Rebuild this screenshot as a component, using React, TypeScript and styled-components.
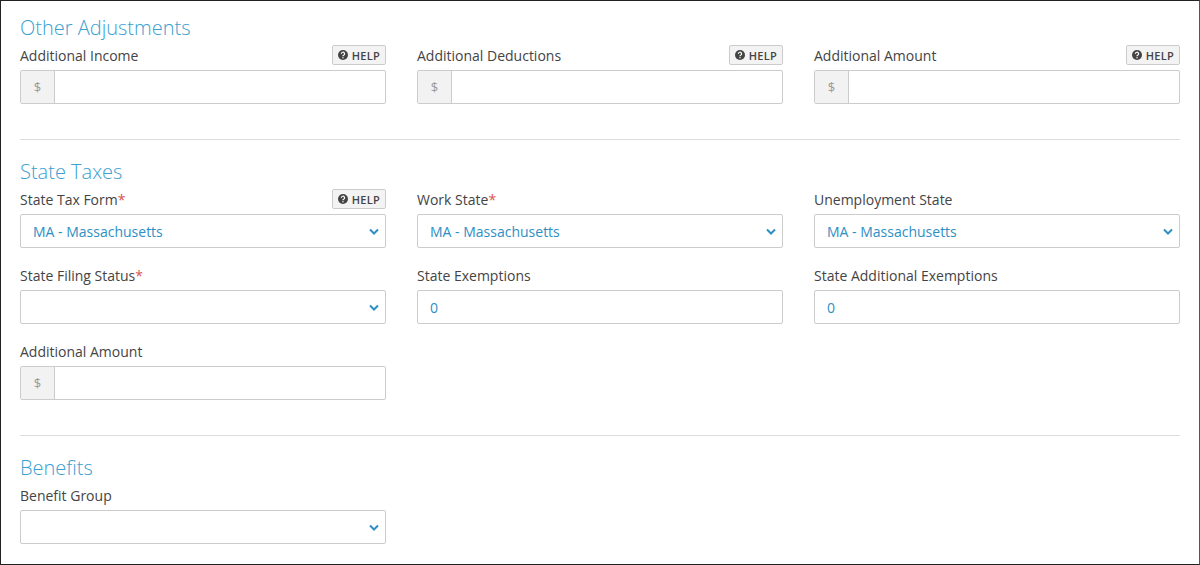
import styled, { createGlobalStyle } from 'styled-components'

const Global = createGlobalStyle`
  body { margin: 0; font-family: "Open Sans", sans-serif; color: #444; background: #fff; }
`

const Frame = styled.div`
  box-sizing: border-box;
  width: 1200px;
  height: 565px;
  border: 1px solid #222;
  border-right-color: #555;
  padding: 11px 19px 0 19px;
  overflow: hidden;
`

const Section = styled.section<{ $last?: boolean }>`
  padding-bottom: ${({ $last }) => ($last ? '0' : '35px')};
  margin-bottom: ${({ $last }) => ($last ? '0' : '16px')};
  border-bottom: ${({ $last }) => ($last ? 'none' : '1px solid #ddd')};
`

const Heading = styled.h2`
  margin: 0 0 1px;
  font-size: 20px;
  font-weight: 300;
  line-height: 32px;
  color: #3ba0cf;
`

const Grid = styled.div`
  display: grid;
  grid-template-columns: repeat(3, 366px);
  column-gap: 31px;
  row-gap: 17px;
`

const Field = styled.div``

const LabelRow = styled.div`
  display: flex;
  justify-content: space-between;
  align-items: center;
  height: 20px;
  margin-bottom: 5px;
`

const Label = styled.label`
  font-size: 14px;
  color: #444;
`

const Req = styled.span`
  color: #d9534f;
`

const Help = styled.span`
  display: inline-flex;
  align-items: center;
  gap: 4px;
  height: 20px;
  padding: 0 5px;
  box-sizing: border-box;
  border: 1px solid #ccc;
  border-radius: 2px;
  background: #f3f3f3;
  font-size: 11px;
  font-weight: 600;
  color: #444;
  letter-spacing: 0.3px;
`

const Box = styled.div`
  display: flex;
  height: 34px;
  box-sizing: border-box;
  border: 1px solid #ccc;
  border-radius: 2px;
  background: #fff;
`

const Addon = styled.span`
  width: 33px;
  display: flex;
  align-items: center;
  justify-content: center;
  background: #f2f2f2;
  border-right: 1px solid #ccc;
  color: #999;
  font-size: 13px;
`

const Value = styled.span`
  flex: 1;
  display: flex;
  align-items: center;
  padding: 0 12px;
  font-size: 14px;
  color: #2e8fc4;
`

const Chevron = styled.span`
  display: flex;
  align-items: center;
  padding-right: 6px;
`

const HelpIcon = () => (
  <svg width="10" height="10" viewBox="0 0 10 10">
    <circle cx="5" cy="5" r="5" fill="#444" />
    <path d="M3.4 3.9a1.6 1.6 0 1 1 2.2 1.4c-.5.2-.6.5-.6.9" stroke="#fff" strokeWidth="1.2" fill="none" />
    <circle cx="5" cy="7.7" r=".7" fill="#fff" />
  </svg>
)

const Money = () => (
  <Box>
    <Addon>$</Addon>
    <Value />
  </Box>
)

const Select = ({ value }: { value?: string }) => (
  <Box>
    <Value>{value}</Value>
    <Chevron>
      <svg width="10" height="7" viewBox="0 0 10 7">
        <path d="M1 1.5l4 4 4-4" stroke="#2e8fc4" strokeWidth="2" fill="none" />
      </svg>
    </Chevron>
  </Box>
)

const Text = ({ value }: { value: string }) => (
  <Box>
    <Value>{value}</Value>
  </Box>
)

const Head = ({ label, req, help }: { label: string; req?: boolean; help?: boolean }) => (
  <LabelRow>
    <Label>
      {label}
      {req ? <Req>*</Req> : null}
    </Label>
    {help ? (
      <Help>
        <HelpIcon />
        HELP
      </Help>
    ) : null}
  </LabelRow>
)

export default function App() {
  return (
    <>
      <Global />
      <Frame>
        <Section>
          <Heading>Other Adjustments</Heading>
          <Grid>
            <Field><Head label="Additional Income" help /><Money /></Field>
            <Field><Head label="Additional Deductions" help /><Money /></Field>
            <Field><Head label="Additional Amount" help /><Money /></Field>
          </Grid>
        </Section>
        <Section>
          <Heading>State Taxes</Heading>
          <Grid>
            <Field><Head label="State Tax Form" req help /><Select value="MA - Massachusetts" /></Field>
            <Field><Head label="Work State" req /><Select value="MA - Massachusetts" /></Field>
            <Field><Head label="Unemployment State" /><Select value="MA - Massachusetts" /></Field>
            <Field><Head label="State Filing Status" req /><Select /></Field>
            <Field><Head label="State Exemptions" /><Text value="0" /></Field>
            <Field><Head label="State Additional Exemptions" /><Text value="0" /></Field>
            <Field><Head label="Additional Amount" /><Money /></Field>
          </Grid>
        </Section>
        <Section $last>
          <Heading>Benefits</Heading>
          <Grid>
            <Field><Head label="Benefit Group" /><Select /></Field>
          </Grid>
        </Section>
      </Frame>
    </>
  )
}
